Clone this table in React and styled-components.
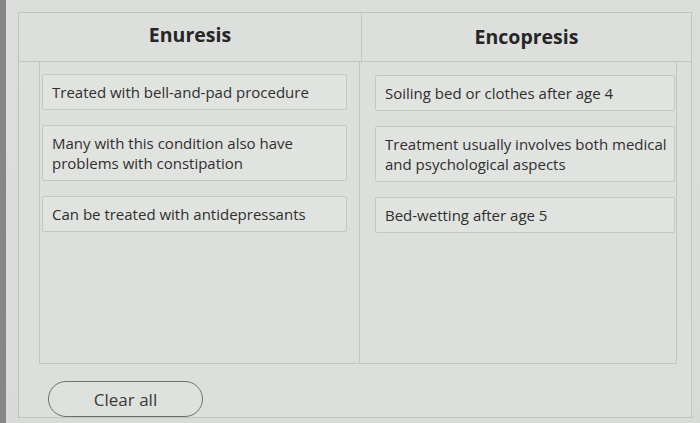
import React from "react";
import styled, { createGlobalStyle } from "styled-components";

const Global = createGlobalStyle`
  html, body { margin: 0; padding: 0; }
  body {
    background: #d7d9d6;
    font-family: "Open Sans", "Liberation Sans", sans-serif;
    color: #2f2f2f;
    width: 700px;
    height: 423px;
    overflow: hidden;
  }
`;

const Screen = styled.div`
  width: 700px;
  height: 423px;
  box-sizing: border-box;
  border-left: 6px solid #858685;
  padding: 12px 8px 0 12px;
  background: linear-gradient(180deg, #dcdedb 0%, #d9dbd8 100%);
`;

const Panel = styled.div`
  box-sizing: border-box;
  height: 406px;
  border: 1px solid #c2c4c1;
  background: #dddfdc;
  display: flex;
  flex-direction: column;
`;

const HeaderRow = styled.div`
  display: grid;
  grid-template-columns: 342px 1fr;
  height: 50px;
  border-bottom: 1px solid #c4c6c3;
`;

const HeaderCell = styled.div`
  display: flex;
  align-items: center;
  justify-content: center;
  font-weight: 700;
  font-size: 19.5px;
  color: #262626;
  padding-bottom: ${(p) => p.$lift}px;
  border-left: ${(p) => (p.$divider ? "1px solid #c4c6c3" : "none")};
`;

const Body = styled.div`
  padding: 0 14px 0 20px;
`;

const DropArea = styled.div`
  display: grid;
  grid-template-columns: 319px 1fr;
  height: 301px;
  border: 1px solid #c4c6c3;
  border-top: none;
`;

const Column = styled.div`
  display: flex;
  flex-direction: column;
  gap: 15px;
  padding: ${(p) => p.$pad};
  border-left: ${(p) => (p.$divider ? "1px solid #c4c6c3" : "none")};
`;

const Card = styled.div`
  box-sizing: border-box;
  min-height: 36px;
  padding: 7px 4px 7px 9px;
  border: 1px solid #c6c8c5;
  border-radius: 2px;
  background: #e1e3e0;
  font-size: 15px;
  line-height: 20px;
  color: #2f2f2f;
  display: flex;
  align-items: center;
`;

const Footer = styled.div`
  padding: 17px 0 0 29px;
`;

const ClearButton = styled.button`
  width: 155px;
  height: 36px;
  border-radius: 18px;
  border: 1.5px solid #6e6f6e;
  background: #dfe1de;
  font-family: "Open Sans", "Liberation Sans", sans-serif;
  font-size: 17px;
  color: #3a3a3a;
  cursor: pointer;
`;

const left = [
  "Treated with bell-and-pad procedure",
  "Many with this condition also have problems with constipation",
  "Can be treated with antidepressants",
];

const right = [
  "Soiling bed or clothes after age 4",
  "Treatment usually involves both medical and psychological aspects",
  "Bed-wetting after age 5",
];

export default function App() {
  return (
    <>
      <Global />
      <Screen>
        <Panel>
          <HeaderRow>
            <HeaderCell $lift={6}>Enuresis</HeaderCell>
            <HeaderCell $divider $lift={1}>Encopresis</HeaderCell>
          </HeaderRow>
          <Body>
            <DropArea>
              <Column $pad="12px 12px 0 2px">
                {left.map((t) => (
                  <Card key={t}>{t}</Card>
                ))}
              </Column>
              <Column $divider $pad="13px 1px 0 15px">
                {right.map((t) => (
                  <Card key={t}>{t}</Card>
                ))}
              </Column>
            </DropArea>
          </Body>
          <Footer>
            <ClearButton>Clear all</ClearButton>
          </Footer>
        </Panel>
      </Screen>
    </>
  );
}
